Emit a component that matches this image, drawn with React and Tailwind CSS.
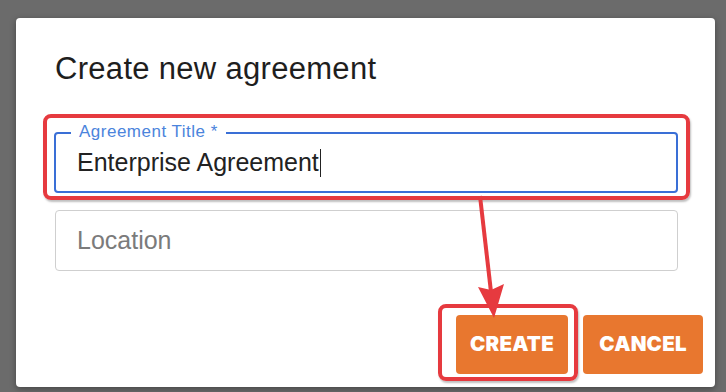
import { useState } from "react";

function App() {
  const [titulo, setTitulo] = useState("Enterprise Agreement");

  return (
    <div className="w-[726px] h-[392px] bg-[#6b6b6b] pl-4 pt-[18px] overflow-hidden">
      <div className="relative w-[699px] h-[369px] bg-white rounded-[4px] shadow-[0_2px_6px_rgba(0,0,0,0.35)] font-['Liberation_Sans',Arial,sans-serif]">
        <h2 className="pl-[39px] pt-[35px] text-[31px] leading-[31px] tracking-[0.3px] text-[#1e1e1e]">
          Create new agreement
        </h2>

        {/* Campo titulo */}
        <div className="relative ml-[38px] mt-[48px] w-[624px] h-[61px] border-2 border-[#3a6fd6] rounded-[4px] flex items-center pl-[21px]">
          <span className="absolute left-[15px] top-[-12px] bg-white px-[8px] text-[17px] leading-[20px] tracking-[0.5px] text-[#4b84dc]">
            Agreement Title *
          </span>
          <span className="text-[25px] text-[#222]">{titulo}</span>
          <span className="inline-block w-px h-[28px] bg-[#222] ml-px" />
        </div>

        {/* Campo ubicacion */}
        <div className="ml-[39px] mt-[17px] w-[623px] h-[61px] border-[1.5px] border-[#cfcfcf] rounded-[4px] flex items-center pl-[21px]">
          <span className="text-[25px] text-[#7b7b7b]">Location</span>
        </div>

        <div className="flex justify-end gap-[15px] pr-[12px] mt-[44px] font-['Inter',sans-serif]">
          <button
            onClick={() => setTitulo(titulo)}
            className="w-[112px] h-[59px] bg-[#e8772f] rounded-[4px] text-white text-[20.5px] font-black tracking-[0.2px]"
          >
            CREATE
          </button>
          <button className="w-[120px] h-[59px] bg-[#e8772f] rounded-[4px] text-white text-[20.5px] font-black tracking-[0.2px]">
            CANCEL
          </button>
        </div>

        {/* Anotaciones */}
        <div className="absolute left-[27px] top-[96px] w-[647px] h-[86px] border-[4px] border-[#e63a3f] rounded-[8px] shadow-[1px_2px_2px_rgba(0,0,0,0.25)] pointer-events-none" />
        <div className="absolute left-[422px] top-[286px] w-[140px] h-[77px] border-[4px] border-[#e63a3f] rounded-[8px] shadow-[1px_2px_2px_rgba(0,0,0,0.25)] pointer-events-none" />
        <svg
          className="absolute left-0 top-0 pointer-events-none"
          width="699"
          height="369"
          viewBox="0 0 699 369"
        >
          <line x1="464" y1="178" x2="475" y2="274" stroke="#e63a3f" strokeWidth="4" />
          <polygon points="478,300 488,266 475,272 462,269" fill="#e63a3f" />
        </svg>
      </div>
    </div>
  );
}

export default App;
